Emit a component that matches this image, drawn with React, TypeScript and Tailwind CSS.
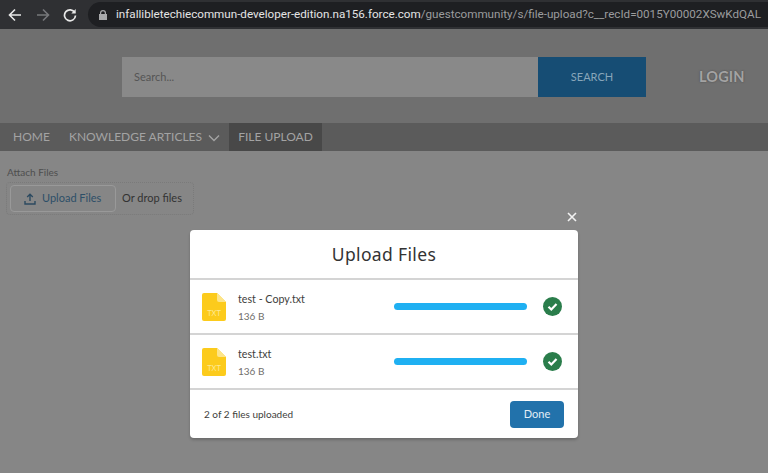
import React from "react";

function FileRow({ name }: { name: string }) {
  return (
    <div className="h-[55px] flex items-center pl-[12px] pr-[16px] border-b-[2px] border-[#d4d4d4]">
      <svg width="24" height="28" viewBox="0 0 24 28" className="shrink-0">
        <path d="M2 0H15L24 9V26a2 2 0 0 1-2 2H2a2 2 0 0 1-2-2V2a2 2 0 0 1 2-2Z" fill="#fccb1c" />
        <path d="M15 0L24 9H17a2 2 0 0 1-2-2Z" fill="#fde58a" />
        <text x="12" y="23" textAnchor="middle" fontSize="7.5" fill="#fde994" fontFamily="Lato, sans-serif">TXT</text>
      </svg>
      <div className="ml-[12px] w-[156px] shrink-0">
        <div className="text-[10.7px] leading-[17px] text-[#3e3e3c]">{name}</div>
        <div className="text-[10px] leading-[16px] mt-[1px] text-[#706e6b]">136 B</div>
      </div>
      <div className="w-[133px] h-[7px] rounded-full bg-[#1fb0f2]" />
      <svg width="19" height="19" viewBox="0 0 19 19" className="ml-[16px] shrink-0">
        <circle cx="9.5" cy="9.5" r="9.5" fill="#2a7d4b" />
        <path d="M5.5 9.8L8.3 12.5L13.5 7" fill="none" stroke="#fff" strokeWidth="2.2" />
      </svg>
    </div>
  );
}

export default function App() {
  return (
    <div className="relative w-[768px] h-[473px] overflow-hidden bg-[#868686] font-['Lato',sans-serif]">
      <div className="h-[29px] bg-[#2f3033] flex items-center">
        <svg width="14" height="14" viewBox="0 0 14 14" className="ml-[8px]" fill="none" stroke="#e8e8e8" strokeWidth="1.6">
          <path d="M13 7H2M7 1.5L1.5 7L7 12.5" />
        </svg>
        <svg width="14" height="14" viewBox="0 0 14 14" className="ml-[14px]" fill="none" stroke="#77787b" strokeWidth="1.6">
          <path d="M1 7H12M7 1.5L12.5 7L7 12.5" />
        </svg>
        <svg width="14" height="14" viewBox="0 0 14 14" className="ml-[13px]" fill="none" stroke="#e8e8e8" strokeWidth="1.7">
          <path d="M11.8 4.6A5.5 5.5 0 1 0 12.5 7.5" />
          <path d="M12.7 1V5.4H8.3Z" fill="#e8e8e8" stroke="none" />
        </svg>
        <div className="ml-[11px] flex-1 h-[25px] rounded-l-full bg-[#1e1f22] flex items-center pl-[11px] whitespace-nowrap overflow-hidden">
          <svg width="8" height="10" viewBox="0 0 8 10" className="shrink-0" fill="#a8a9ab">
            <path d="M1 4V3a3 3 0 0 1 6 0V4H8V10H0V4ZM2.2 4H5.8V3a1.8 1.8 0 0 0-3.6 0Z" />
          </svg>
          <span className="ml-[9px] text-[11.65px] font-['Roboto',sans-serif] text-[#e4e4e4]">
            infallibletechiecommun-developer-edition.na156.force.com
            <span className="text-[#9b9c9e]">/guestcommunity/s/file-upload?c__recId=0015Y00002XSwKdQAL</span>
          </span>
        </div>
      </div>

      <div className="h-[94px] bg-[#6f6f6f] flex items-start pt-[28px] pl-[122px]">
        <div className="w-[416px] h-[40px] bg-[#898989] flex items-center pl-[12px] text-[11px] text-[#555555]">Search...</div>
        <div className="w-[108px] h-[40px] bg-[#164d74] flex items-center justify-center text-[11px] text-[#88a6ba]">SEARCH</div>
        <div className="ml-[53px] h-[40px] flex items-center text-[14.5px] font-bold tracking-[0.01em] text-[#a3a3a3] [text-shadow:0_0_2px_#4a4a4a]">LOGIN</div>
      </div>

      <div className="h-[28px] bg-[#5b5b5b] flex items-center text-[12px] text-[#a3a3a3]">
        <span className="ml-[13px] w-[36px]">HOME</span>
        <span className="ml-[20px] w-[132px] whitespace-nowrap">KNOWLEDGE ARTICLES</span>
        <svg width="12" height="8" viewBox="0 0 12 8" className="ml-[7px] mt-[2px]" fill="none" stroke="#a3a3a3" strokeWidth="1.4">
          <path d="M1 1.5L6 6.5L11 1.5" />
        </svg>
        <div className="ml-[9px] w-[93px] h-full bg-[#484848] flex items-center justify-center">FILE UPLOAD</div>
      </div>

      <div className="pl-[6px] pt-[15px]">
        <div className="pl-[1px] text-[10px] leading-[13px] text-[#4e4e4e]">Attach Files</div>
        <div className="mt-[3px] w-[188px] h-[33px] rounded-[4px] border border-dotted border-[#7a7a7a] flex items-center pl-[3px]">
          <div className="w-[106px] h-[27px] rounded-[4px] border border-[#999999] flex items-center pl-[13px] text-[11px] text-[#2d4f68]">
            <svg width="12" height="12" viewBox="0 0 12 12" fill="none" stroke="#2c4a60" strokeWidth="1.4" className="shrink-0">
              <path d="M6 8V1.5M3.2 4L6 1.2L8.8 4M1 8V11H11V8" />
            </svg>
            <span className="ml-[6px]">Upload Files</span>
          </div>
          <span className="ml-[6px] text-[11px] text-[#333333]">Or drop files</span>
        </div>
      </div>

      <svg width="10" height="10" viewBox="0 0 10 10" className="absolute left-[567px] top-[212px]" fill="none" stroke="#f2f2f2" strokeWidth="1.6">
        <path d="M1 1L9 9M9 1L1 9" />
      </svg>

      <div className="absolute left-[190px] top-[230px] w-[388px] h-[208px] rounded-[4px] bg-white shadow-[0_2px_3px_rgba(0,0,0,0.2)]">
        <div className="h-[50px] border-b-[2px] border-[#d4d4d4] flex items-center justify-center text-[17.5px] tracking-[0.02em] text-[#333333] font-['Noto_Sans',sans-serif]">
          Upload Files
        </div>
        <FileRow name="test - Copy.txt" />
        <FileRow name="test.txt" />
        <div className="h-[48px] flex items-center justify-between pl-[14px] pr-[14px]">
          <span className="pt-[1px] text-[10px] text-[#3e3e3c]">2 of 2 files uploaded</span>
          <div className="w-[54px] h-[27px] rounded-[4px] bg-[#2272ab] flex items-center justify-center text-[11px] text-[#e3eef6]">Done</div>
        </div>
      </div>
    </div>
  );
}
